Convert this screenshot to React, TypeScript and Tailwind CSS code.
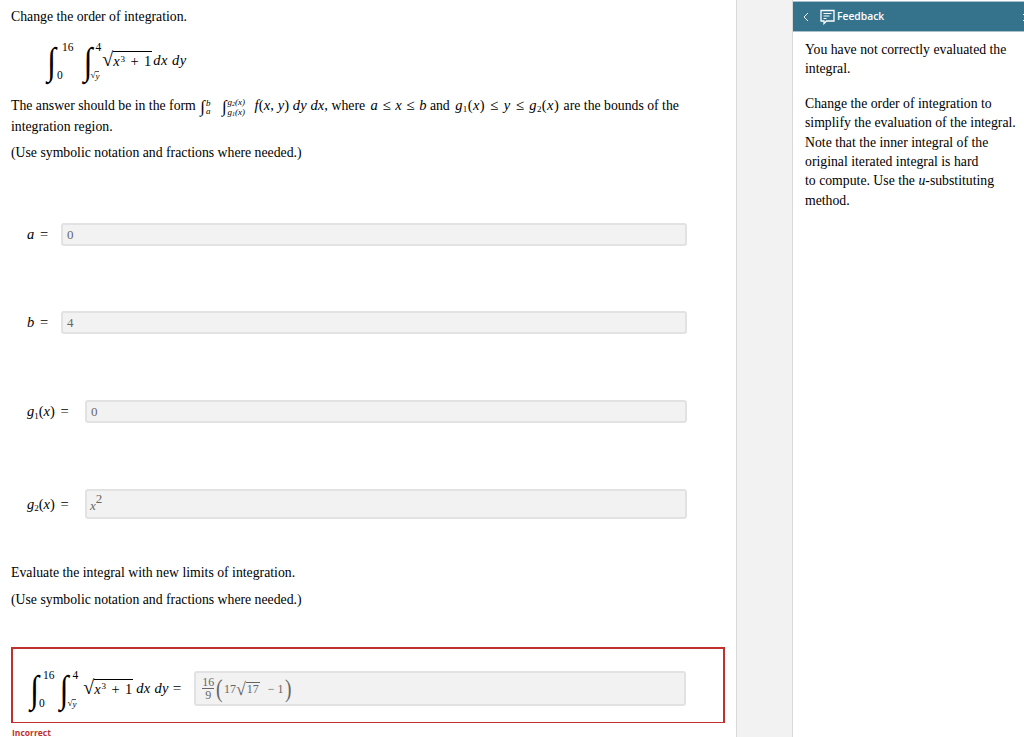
import React from "react";

const serif = { fontFamily: '"Liberation Serif", serif' };

// big integral sign with limits stacked to the right
const Integral: React.FC<{ upper: string; lower: React.ReactNode; upperClass: string; lowerClass: string; className?: string }> = ({
  upper,
  lower,
  upperClass,
  lowerClass,
  className,
}) => (
  <span className={`inline-flex items-stretch h-[40px] ${className ?? ""}`}>
    <span className="text-[32px] leading-[40px] w-[10px] italic scale-y-[1.2]">∫</span>
    <span className="flex flex-col justify-between text-[11.5px] leading-[12px]">
      <span className={upperClass}>{upper}</span>
      <span className={lowerClass}>{lower}</span>
    </span>
  </span>
);

const SqrtY = () => (
  <span className="inline-flex items-end text-[9px]">
    <span>√</span>
    <span className="italic border-t border-[#555] leading-[9px]">y</span>
  </span>
);

const Radical: React.FC = () => (
  <span className="inline-flex items-end">
    <span className="text-[20px] leading-[21px]">√</span>
    <span className="border-t border-black leading-[18px] text-[14.5px] tracking-[0.9px]">
      <i>x</i>
      <sup className="text-[9px] leading-none">3</sup> + 1
    </span>
  </span>
);

const Le = () => <span className="text-[15px] mx-[1px]">≤</span>;

const AnswerRow: React.FC<{ label: React.ReactNode; value: React.ReactNode; labelWidth: string; boxH: string; mt: string }> = ({
  label,
  value,
  labelWidth,
  boxH,
  mt,
}) => (
  <div className={`flex items-center ${mt}`}>
    <div className={`${labelWidth} pl-[16px] text-[14.5px] leading-none whitespace-nowrap [word-spacing:2px]`}>{label}</div>
    <div className={`flex-1 ${boxH} bg-[#f2f2f2] border-2 border-[#e2e2e2] rounded-[3px] pl-[4px] flex items-center text-[13px] text-[#666]`}>
      {value}
    </div>
  </div>
);

const App: React.FC = () => {
  return (
    <div className="flex w-[1024px] h-[737px] overflow-hidden bg-white text-black text-[13.75px]" style={serif}>
      {/* question */}
      <div className="w-[736px] shrink-0 pl-[11px] pr-[11px]">
        <p className="mt-[8px] leading-[17px]">Change the order of integration.</p>

        <div className="flex items-center ml-[36px] mt-[13px] h-[46px]">
          <Integral upper="16" lower="0" upperClass="ml-[5px]" lowerClass="ml-0" />
          <Integral upper="4" lower={<SqrtY />} upperClass="ml-[2px]" lowerClass="-ml-[3px]" className="ml-[10px]" />
          <span className="ml-[1px]">
            <Radical />
          </span>
          <span className="italic text-[14.5px] ml-[1px] tracking-[0.5px]">dx dy</span>
        </div>

        <p className="mt-[11px] w-[700px] leading-[21px]">
          The answer should be in the form{" "}
          <span className="inline-flex items-center align-middle h-[14px] text-[17px] ml-[1px] mr-[6px]">
            <i>∫</i>
            <span className="flex flex-col text-[9px] leading-[8px] italic ml-[1px] w-[16px]">
              <span>b</span>
              <span>a</span>
            </span>
            <i>∫</i>
            <span className="flex flex-col text-[9px] leading-[10px] italic ml-[1px]">
              <span>
                g<sub className="text-[6px] leading-none">2</sub>(x)
              </span>
              <span>
                g<sub className="text-[6px] leading-none">1</sub>(x)
              </span>
            </span>
          </span>{" "}
          <span className="text-[14.5px] tracking-[0.1px]">
            <i>f</i>(<i>x</i>, <i>y</i>) <i>dy dx</i>,
          </span>{" "}
          where{" "}
          <span className="text-[14.5px] ml-[2px]">
            <i>a</i> <Le /> <i>x</i> <Le /> <i>b</i>
          </span>{" "}
          and{" "}
          <span className="text-[14.5px] tracking-[0.4px] ml-[2px] mr-[1px]">
            <i>g</i>
            <sub className="text-[9px]">1</sub>(<i>x</i>) <Le /> <i>y</i> <Le /> <i>g</i>
            <sub className="text-[9px]">2</sub>(<i>x</i>)
          </span>{" "}
          are the bounds of the
          <br />
          integration region.
        </p>

        <p className="mt-[7px] leading-[17px]">(Use symbolic notation and fractions where needed.)</p>

        <div className="w-[676px]">
          <AnswerRow mt="mt-[62px]" labelWidth="w-[50px]" boxH="h-[23px]" label={<><i>a</i> =</>} value="0" />
          <AnswerRow mt="mt-[65px]" labelWidth="w-[50px]" boxH="h-[23px]" label={<><i>b</i> =</>} value="4" />
          <AnswerRow
            mt="mt-[66px]"
            labelWidth="w-[74px]"
            boxH="h-[23px]"
            label={<><i>g</i><sub className="text-[9px]">1</sub>(<i>x</i>) =</>}
            value="0"
          />
          <AnswerRow
            mt="mt-[66px]"
            labelWidth="w-[74px]"
            boxH="h-[30px]"
            label={<><i>g</i><sub className="text-[9px]">2</sub>(<i>x</i>) =</>}
            value={
              <span className="-ml-[1px] mt-[3px]">
                <i>x</i>
                <sup className="text-[13px]">2</sup>
              </span>
            }
          />
        </div>

        <p className="mt-[45px] leading-[17px]">Evaluate the integral with new limits of integration.</p>
        <p className="mt-[10px] leading-[17px]">(Use symbolic notation and fractions where needed.)</p>

        <div className="mt-[39px] w-[714px] h-[76px] border-2 border-[#c0312d] border-b flex items-center pl-[17px] pt-[6px]">
          <Integral upper="16" lower="0" upperClass="ml-[3px]" lowerClass="-ml-[1px]" />
          <Integral upper="4" lower={<SqrtY />} upperClass="ml-[3px]" lowerClass="-ml-[2px]" className="ml-[5px]" />
          <span className="ml-[5px]">
            <Radical />
          </span>
          <span className="italic text-[14.5px] ml-[3px] tracking-[0.3px]">dx dy</span>
          <span className="text-[15px] ml-[4px]">=</span>
          <div className="ml-[13px] w-[492px] h-[35px] shrink-0 bg-[#f2f2f2] border-2 border-[#e2e2e2] rounded-[3px] flex items-center pl-[6px] text-[#666] text-[12px]">
            <span className="flex flex-col items-center leading-[12px]">
              <span className="border-b border-[#666]">16</span>
              <span>9</span>
            </span>
            <span className="text-[26px] leading-none ml-[1px] scale-x-75">(</span>
            <span>17</span>
            <span className="text-[18px] leading-[18px]">√</span>
            <span className="border-t border-[#666] leading-[13px] px-[1px]">17</span>
            <span className="ml-[8px]">−</span>
            <span className="ml-[3px]">1</span>
            <span className="text-[26px] leading-none scale-x-75">)</span>
          </div>
        </div>

        <p className="mt-[5px] ml-[1px] text-[8.5px] leading-[9px] text-[#c0312d] font-['Open_Sans'] font-bold">Incorrect</p>
      </div>

      {/* gutter */}
      <div className="w-[57px] shrink-0 bg-[#f2f2f2] border-x border-[#d9d9d9]" />

      {/* feedback panel */}
      <div className="flex-1 pt-[1px]">
        <div className="h-[31px] bg-[#35728c] border-y border-[#a9c0ca] flex items-center pl-[10px] text-white font-['Open_Sans'] relative">
          <svg width="6" height="10" viewBox="0 0 6 10" fill="none" stroke="#ffffff" strokeWidth="1" className="opacity-90">
            <path d="M5 1 1 5l4 4" />
          </svg>
          <svg width="15" height="16" viewBox="0 0 15 16" fill="none" stroke="#ffffff" className="ml-[11px]">
            <path d="M1 1.5h13v10.5H6.5L4 14.5V12H1z" strokeWidth="1.3" />
            <path d="M3.5 4.5h8M3.5 7h6M3.5 9.5h3" strokeWidth="1.1" />
          </svg>
          <span className="ml-[2px] text-[10.3px] font-semibold">Feedback</span>
          {/* sliver of the menu icon at the panel edge */}
          <span className="absolute right-0 top-[12px] w-[1px] h-[1px] bg-white" />
          <span className="absolute right-0 top-[18px] w-[1px] h-[1px] bg-white" />
        </div>
        <div className="pl-[12px] text-[13.75px] leading-[19.4px]">
          <p className="mt-[8px]">
            You have not correctly evaluated the
            <br />
            integral.
          </p>
          <p className="mt-[15px]">
            Change the order of integration to
            <br />
            simplify the evaluation of the integral.
            <br />
            Note that the inner integral of the
            <br />
            original iterated integral is hard
            <br />
            to compute. Use the <i>u</i>-substituting
            <br />
            method.
          </p>
        </div>
      </div>
    </div>
  );
};

export default App;
